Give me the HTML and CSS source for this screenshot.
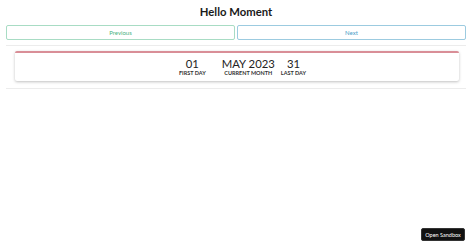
FILE: index.html
```html
<!DOCTYPE html>
<html>
<head>
<meta charset="utf-8">
<link rel="stylesheet" href="styles.css">
</head>
<body>
<div class="app">
  <h1 class="title">Hello Moment</h1>
  <div class="nav">
    <button class="btn btn-prev">Previous</button>
    <button class="btn btn-next">Next</button>
  </div>
  <hr class="rule">
  <div class="card">
    <div class="stats">
      <div class="stat stat-first"><div class="num">01</div><div class="label">FIRST DAY</div></div>
      <div class="stat stat-month"><div class="num">MAY 2023</div><div class="label">CURRENT MONTH</div></div>
      <div class="stat"><div class="num">31</div><div class="label">LAST DAY</div></div>
    </div>
  </div>
  <hr class="rule rule-bottom">
</div>
<button class="sandbox">Open Sandbox</button>
</body>
</html>
```
FILE: styles.css
```css
html, body { margin: 0; padding: 0; background: #fff; }
body { font-family: Lato, "Open Sans", sans-serif; color: #222; width: 474px; height: 248px; position: relative; overflow: hidden; }
.app { padding: 0 8px 0 6px; }
.title { margin: 0; padding-top: 4px; font-size: 11.3px; font-weight: 700; text-align: center; line-height: 15px; color: #1a1a1a; }
.nav { display: flex; gap: 2px; margin-top: 6px; }
.btn { flex: 1; height: 15px; background: #fff; font-family: Lato, sans-serif; font-size: 6px; border-radius: 2px; padding: 0; }
.btn-prev { border: 1px solid #a8dcc4; color: #4cb382; }
.btn-next { border: 1px solid #9ccbe0; color: #4a9cc8; }
.rule { border: 0; border-top: 1px solid #ececec; margin: 5px 0 0 0; }
.rule-bottom { margin-top: 7px; }
.card { margin: 5px 7px 0 9px; border-top: 2px solid #d98e97; background: #fff; box-shadow: 0 1px 3px rgba(0,0,0,0.25); border-radius: 2px; height: 28px; display: flex; align-items: center; justify-content: center; }
.stats { display: flex; padding-left: 11px; }
.stat { display: flex; flex-direction: column; align-items: center; }
.stat-first { margin-right: 16px; }
.stat-month { margin-right: 6px; }
.num { font-size: 11.3px; line-height: 13px; color: #222; }
.label { font-size: 5.5px; font-weight: 700; line-height: 7px; color: #333; }
.sandbox { position: absolute; right: 9px; bottom: 7px; background: #111; color: #fff; border: 1px solid #333; border-radius: 2px; font-family: Lato, sans-serif; font-size: 5.5px; height: 13px; width: 44px; padding: 0; }
```
